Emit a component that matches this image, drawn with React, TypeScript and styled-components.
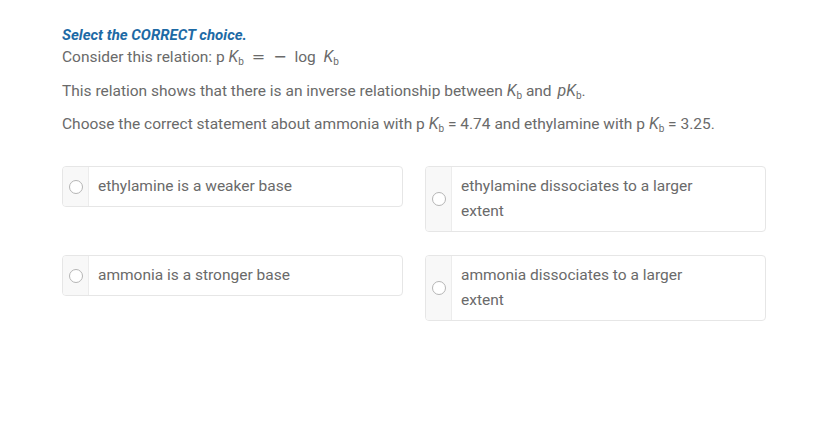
import React, { FunctionComponent } from "react";
import styled, { createGlobalStyle } from "styled-components";

const GlobalStyle = createGlobalStyle`
  body {
    margin: 0;
    background: #fff;
    font-family: Roboto, "Noto Sans", sans-serif;
  }
`;

const Page = styled.div`
  padding: 25px 0 0 62px;
  width: 705px;
  color: #6a6a6a;
  font-size: 15.5px;
`;

const Title = styled.div`
  color: #1d6aa5;
  font-weight: 700;
  font-style: italic;
  font-size: 15px;
  line-height: 20px;
`;

const Para = styled.p<{ $gap?: number }>`
  margin: ${ p => p.$gap ?? 0 }px 0 0;
  line-height: 22px;
  height: 22px;
`;

const K = styled.span<{ $space?: number }>`
  font-style: italic;
  font-size: 16px;
  margin-left: ${ p => p.$space ?? 0 }px;
`;

const Sub = styled.sub`
  font-size: 10px;
  line-height: 0;
  vertical-align: -3px;
  font-style: normal;
`;

const Op = styled.span`
  display: inline-block;
  font-family: "DejaVu Sans", sans-serif;
  font-size: 16px;
  margin: 0 4px;
`;

const Grid = styled.div`
  display: grid;
  grid-template-columns: 341px 341px;
  column-gap: 22px;
  row-gap: 23px;
  align-items: start;
  margin-top: 31px;
`;

const Card = styled.label`
  display: flex;
  border: 1px solid #e6e6e6;
  border-radius: 4px;
  overflow: hidden;
  cursor: pointer;
`;

const RadioCol = styled.div`
  width: 25px;
  flex: none;
  background: #f8f8f8;
  border-right: 1px solid #ececec;
  display: flex;
  align-items: center;
  justify-content: center;
`;

const Radio = styled.span`
  width: 12px;
  height: 12px;
  border: 1px solid #b5b5b5;
  border-radius: 50%;
  background: #fff;
`;

const Text = styled.div`
  padding: 7px 10px 7px 9px;
  max-width: 250px;
  line-height: 25px;
  font-size: 15.5px;
`;

const Kb: FunctionComponent<{ space?: number }> = ( { space } ) => (
  <>
    <K $space={ space }>K</K>
    <Sub>b</Sub>
  </>
);

const choices = [
  "ethylamine is a weaker base",
  "ethylamine dissociates to a larger extent",
  "ammonia is a stronger base",
  "ammonia dissociates to a larger extent",
];

const App: FunctionComponent = () => (
  <>
    <GlobalStyle />
    <Page>
      <Title>Select the CORRECT choice.</Title>
      <Para $gap={ 1 }>
        Consider this relation: p<Kb space={ 4 } />
        &nbsp;
        <Op>=</Op>
        <Op>−</Op> log&nbsp;&nbsp;
        <Kb />
      </Para>
      <Para $gap={ 12 }>
        This relation shows that there is an inverse relationship between <Kb /> and{ " " }
        <K $space={ 2 }>p</K>
        <Kb />.
      </Para>
      <Para $gap={ 11 }>
        Choose the correct statement about ammonia with p<Kb space={ 4 } /> = 4.74 and ethylamine with p
        <Kb space={ 4 } /> = 3.25.
      </Para>
      <Grid>
        { choices.map( c => (
          <Card key={ c }>
            <RadioCol>
              <Radio />
            </RadioCol>
            <Text>{ c }</Text>
          </Card>
        ) ) }
      </Grid>
    </Page>
  </>
);

export default App;
